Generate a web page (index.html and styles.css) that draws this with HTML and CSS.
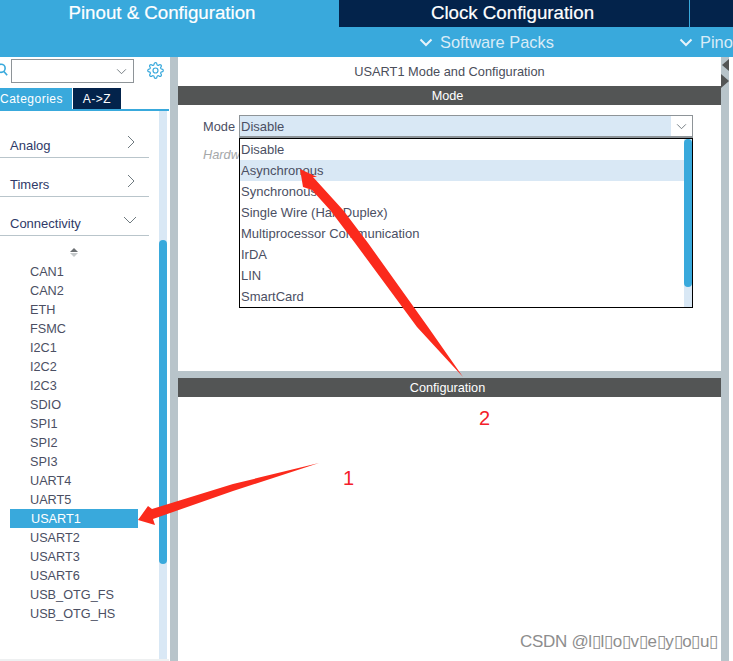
FILE: index.html
```html
<!DOCTYPE html>
<html lang="en">
<head>
<meta charset="utf-8">
<title>Pinout &amp; Configuration</title>
<link rel="stylesheet" href="styles.css">
</head>
<body>
<div class="app">
  <header class="header">
    <nav class="tabs">
      <div class="tab tab-active">Pinout &amp; Configuration</div>
      <div class="tab tab-clock">Clock Configuration</div>
      <div class="tab tab-rest"></div>
    </nav>
    <div class="subbar">
      <div class="submenu submenu-packs">
        <svg class="sub-chev" viewBox="0 0 14 9"><path d="M1.5 1.5 7 7l5.5-5.5"/></svg>
        <span>Software Packs</span>
      </div>
      <div class="submenu submenu-pinout">
        <svg class="sub-chev" viewBox="0 0 14 9"><path d="M1.5 1.5 7 7l5.5-5.5"/></svg>
        <span>Pinout</span>
      </div>
    </div>
  </header>

  <main class="workspace">
    <aside class="sidebar">
      <div class="search-row">
        <svg class="search-icon" viewBox="0 0 16 16"><circle cx="5" cy="6.500" r="5"/><path d="m8.500 10.500 4 4.500"/></svg>
        <div class="search-box">
          <svg class="chev-small" viewBox="0 0 12 8"><path d="M1 1.500 6 6.500l5-5"/></svg>
        </div>
        <svg class="gear" viewBox="0 0 24 24">
          <circle cx="12" cy="12" r="3.500"/>
          <path d="M19.4 15a1.65 1.65 0 0 0 .33 1.82l.06.06a2 2 0 0 1 0 2.83 2 2 0 0 1-2.83 0l-.06-.06a1.65 1.65 0 0 0-1.82-.33 1.65 1.65 0 0 0-1 1.51V21a2 2 0 0 1-2 2 2 2 0 0 1-2-2v-.09A1.65 1.65 0 0 0 9 19.4a1.65 1.65 0 0 0-1.82.33l-.06.06a2 2 0 0 1-2.83 0 2 2 0 0 1 0-2.83l.06-.06a1.65 1.65 0 0 0 .33-1.82 1.65 1.65 0 0 0-1.51-1H3a2 2 0 0 1-2-2 2 2 0 0 1 2-2h.09A1.65 1.65 0 0 0 4.600 9a1.65 1.65 0 0 0-.33-1.82l-.06-.06a2 2 0 0 1 0-2.83 2 2 0 0 1 2.83 0l.06.06a1.65 1.65 0 0 0 1.82.33H9a1.65 1.65 0 0 0 1-1.51V3a2 2 0 0 1 2-2 2 2 0 0 1 2 2v.09a1.65 1.65 0 0 0 1 1.51 1.65 1.65 0 0 0 1.82-.33l.06-.06a2 2 0 0 1 2.83 0 2 2 0 0 1 0 2.83l-.06.06a1.65 1.65 0 0 0-.33 1.82V9a1.65 1.65 0 0 0 1.51 1H21a2 2 0 0 1 2 2 2 2 0 0 1-2 2h-.09a1.65 1.65 0 0 0-1.51 1z"/>
        </svg>
      </div>
      <div class="cat-tabs">
        <div class="cat-tab cat-tab-on">Categories</div>
        <div class="cat-tab cat-tab-off">A-&gt;Z</div>
      </div>
      <div class="side-body">
        <div class="side-list">
          <div class="group">
            <span>Analog</span>
            <svg class="chev-right" viewBox="0 0 8 14"><path d="m1 1 6 6-6 6"/></svg>
          </div>
          <div class="group">
            <span>Timers</span>
            <svg class="chev-right" viewBox="0 0 8 14"><path d="m1 1 6 6-6 6"/></svg>
          </div>
          <div class="group">
            <span>Connectivity</span>
            <svg class="chev-down" viewBox="0 0 14 8"><path d="m1 1 6 6 6-6"/></svg>
          </div>
          <div class="sorter">
            <span class="sort-up"></span>
            <span class="sort-down"></span>
          </div>
          <ul class="periph">
            <li>CAN1</li>
            <li>CAN2</li>
            <li>ETH</li>
            <li>FSMC</li>
            <li>I2C1</li>
            <li>I2C2</li>
            <li>I2C3</li>
            <li>SDIO</li>
            <li>SPI1</li>
            <li>SPI2</li>
            <li>SPI3</li>
            <li>UART4</li>
            <li>UART5</li>
            <li class="periph-on">USART1</li>
            <li>USART2</li>
            <li>USART3</li>
            <li>USART6</li>
            <li>USB_OTG_FS</li>
            <li>USB_OTG_HS</li>
          </ul>
        </div>
        <div class="side-scroll"><div class="side-thumb"></div></div>
      </div>
    </aside>

    <div class="splitter"></div>

    <section class="content">
      <div class="mode-pane">
        <div class="pane-title">USART1 Mode and Configuration</div>
        <div class="bar">Mode</div>
        <div class="mode-form">
          <div class="mode-row">
            <span class="mode-label">Mode</span>
            <div class="select">
              <span class="select-value">Disable</span>
              <span class="select-btn"><svg class="chev-small" viewBox="0 0 12 8"><path d="M1 1.500 6 6.500l5-5"/></svg></span>
            </div>
          </div>
          <div class="hardware">Hardw</div>
          <div class="dropdown">
            <ul class="options">
              <li>Disable</li>
              <li class="option-on">Asynchronous</li>
              <li>Synchronous</li>
              <li>Single Wire (Half-Duplex)</li>
              <li>Multiprocessor Communication</li>
              <li>IrDA</li>
              <li>LIN</li>
              <li>SmartCard</li>
            </ul>
            <div class="drop-scroll"><div class="drop-thumb"></div></div>
          </div>
        </div>
      </div>
      <div class="config-pane">
        <div class="bar">Configuration</div>
      </div>
    </section>

    <div class="right-split">
      <span class="tri-left"></span>
      <span class="tri-right"></span>
    </div>
    <div class="right-gutter"></div>
  </main>
</div>

<svg class="arrows" viewBox="0 0 733 661">
  <polygon points="319,463 233,484 152,509 148,506 138,520 155,525 153,519 233,491"/>
  <polygon points="300,169 317,177 313,177 343,210 368,243 428,327 463,377 417,327 355,243 330,210 312,190 303,187"/>
</svg>
<span class="note note-1">1</span>
<span class="note note-2">2</span>
<div class="watermark">CSDN @l▯l▯o▯v▯e▯y▯o▯u▯</div>
</body>
</html>
```
FILE: styles.css
```css
* { box-sizing: border-box; }
html, body { margin: 0; height: 100%; overflow: hidden; background: #fff; }
body { font-family: "Liberation Sans", Arial, sans-serif; position: relative; }
ul { list-style: none; margin: 0; padding: 0; }
svg { display: block; fill: none; }

.app { width: 733px; height: 661px; display: flex; flex-direction: column; }

/* header */
.header { background: #39a9dc; height: 57px; flex: none; }
.tabs { display: flex; height: 27px; }
.tab { font-size: 18.700px; line-height: 25px; color: #fff; text-align: center; -webkit-text-stroke: .2px #fff; }
.tab-active { width: 338px; padding-right: 14px; margin-right: 1px; }
.tab-clock { width: 350px; background: #03234b; margin-right: 1px; padding-right: 3px; }
.tab-rest { flex: 1; background: #03234b; }
.subbar { display: flex; height: 30px; padding-top: 1px; align-items: center; color: #d9ecf7; font-size: 16.400px; overflow: hidden; }
.submenu { display: flex; align-items: center; gap: 7px; white-space: nowrap; flex: none; }
.submenu-packs { margin-left: 419px; width: 260px; }
.sub-chev { width: 14px; height: 9px; stroke: #e6f3fa; stroke-width: 2; }

/* workspace */
.workspace { flex: 1; display: flex; min-height: 0; }
.sidebar { width: 170px; flex: none; display: flex; flex-direction: column; background: #fff; }
.search-row { height: 31px; display: flex; align-items: flex-start; padding-top: 2px; position: relative; }
.search-icon { position: absolute; left: -3px; top: 5px; width: 13px; height: 15px; stroke: #39a9dc; stroke-width: 2; }
.search-box { margin-left: 11px; width: 123px; height: 24px; border: 1px solid #8e9498; display: flex; align-items: center; justify-content: flex-end; padding-right: 6px; }
.chev-small { width: 11px; height: 7px; stroke: #666f75; stroke-width: 1; }
.gear { width: 17px; height: 17px; margin-left: 13px; margin-top: 3px; stroke: #39a9dc; stroke-width: 1.700; }
.cat-tabs { display: flex; height: 21px; }
.cat-tab { font-size: 12px; line-height: 22px; letter-spacing: .5px; color: #fff; }
.cat-tab-on { width: 72px; background: #39a9dc; margin-right: 1px; }
.cat-tab-off { width: 48px; background: #03234b; text-align: center; }
.side-body { flex: 1; display: flex; min-height: 0; border-top: 2px solid #39a9dc; margin-right: 1px; position: relative; background: #fff; border-bottom: 2px solid #eef0f1; }
.side-list { width: 159px; flex: none; padding-top: 8px; }
.group { width: 149px; height: 39px; border-bottom: 1px solid #b9c5cb; display: flex; align-items: flex-end; justify-content: space-between; padding: 0 14px 3px 10px; font-size: 13px; line-height: 16px; color: #2f3a68; }
.chev-right { width: 8px; height: 14px; stroke: #6f7a80; stroke-width: 1; margin-bottom: 5px; }
.chev-down { width: 14px; height: 8px; stroke: #6f7a80; stroke-width: 1; margin-bottom: 8px; margin-right: -2px; }
.sorter { display: flex; flex-direction: column; align-items: center; gap: 1px; width: 147px; margin-top: 12px; height: 11px; }
.sort-up { width: 0; height: 0; border: 4px solid transparent; border-top: 0; border-bottom: 4px solid #6b6f72; }
.sort-down { width: 0; height: 0; border: 4px solid transparent; border-bottom: 0; border-top: 4px solid #c4c8ca; }
.periph { margin-top: 3px; margin-left: 10px; width: 128px; }
.periph li { height: 19px; line-height: 20px; font-size: 12.700px; padding-left: 20px; color: #4b4f63; }
.periph .periph-on { background: #39a9dc; color: #fff; padding-left: 21px; }
.side-scroll { width: 8px; background: #d9e8f5; position: relative; }
.side-thumb { position: absolute; left: 0; right: 0; top: 129px; height: 324px; background: #39a9dc; border-radius: 4px; }

.splitter { width: 8px; flex: none; background: #b8c4ca; }

.content { width: 543px; flex: none; display: flex; flex-direction: column; }
.mode-pane { height: 314px; flex: none; }
.pane-title { height: 29px; line-height: 30px; text-align: center; font-size: 12.800px; color: #4a4e5a; }
.bar { height: 19px; line-height: 20px; background: #535555; color: #fff; text-align: center; font-size: 12.700px; padding-right: 4px; }
.mode-form { position: relative; padding: 10px 28px 0 25px; }
.mode-row { display: flex; align-items: center; height: 23px; }
.mode-label { width: 36px; font-size: 12.800px; line-height: 24px; color: #4b4f63; }
.select { flex: 1; height: 23px; border: 1px solid #8e9498; border-bottom-width: 2px; display: flex; background: #d9e8f5; font-size: 13px; color: #4b4f63; }
.select-value { flex: 1; line-height: 22px; padding-left: 1px; }
.select-btn { width: 21px; background: #fff; display: flex; align-items: center; justify-content: center; }
.hardware { font-style: italic; font-size: 12.800px; color: #a5a8aa; margin-top: 9px; height: 15px; line-height: 15px; white-space: nowrap; }
.dropdown { position: absolute; left: 61px; top: 33px; width: 454px; height: 170px; border: 1px solid #000; background: #fff; display: flex; }
.options { flex: 1; }
.options li { height: 21px; line-height: 22px; font-size: 13px; padding-left: 1px; color: #4b4f63; }
.options .option-on { background: #d9e8f5; }
.drop-scroll { width: 8px; background: #d9e8f5; position: relative; }
.drop-thumb { height: 148px; background: #39a9dc; border-radius: 4px; }

.config-pane { flex: 1; border-top: 7px solid #b8c4ca; }

.right-split { width: 8px; flex: none; background: #b8c4ca; display: flex; flex-direction: column; padding-top: 2px; gap: 3px; }
.tri-left { width: 0; height: 0; border: 6px solid transparent; border-left: 0; border-right: 7px solid #535555; margin-left: 1px; }
.tri-right { width: 0; height: 0; border: 7px solid transparent; border-right: 0; border-left: 8px solid #535555; margin-left: 0; }
.right-gutter { flex: 1; background: #fff; }

/* overlays */
.arrows { position: absolute; left: 0; top: 0; width: 733px; height: 661px; pointer-events: none; }
.arrows polygon { fill: #fb2a1c; }
.note { position: absolute; color: #f4202a; font-size: 20px; line-height: 24px; }
.note-1 { left: 343px; top: 466px; }
.note-2 { left: 479px; top: 406px; }
.watermark { position: absolute; left: 520px; top: 632px; font-size: 17px; line-height: 20px; letter-spacing: -.3px; color: #8d8d8d; white-space: nowrap; text-shadow: 0 0 1px #fff; }
```
